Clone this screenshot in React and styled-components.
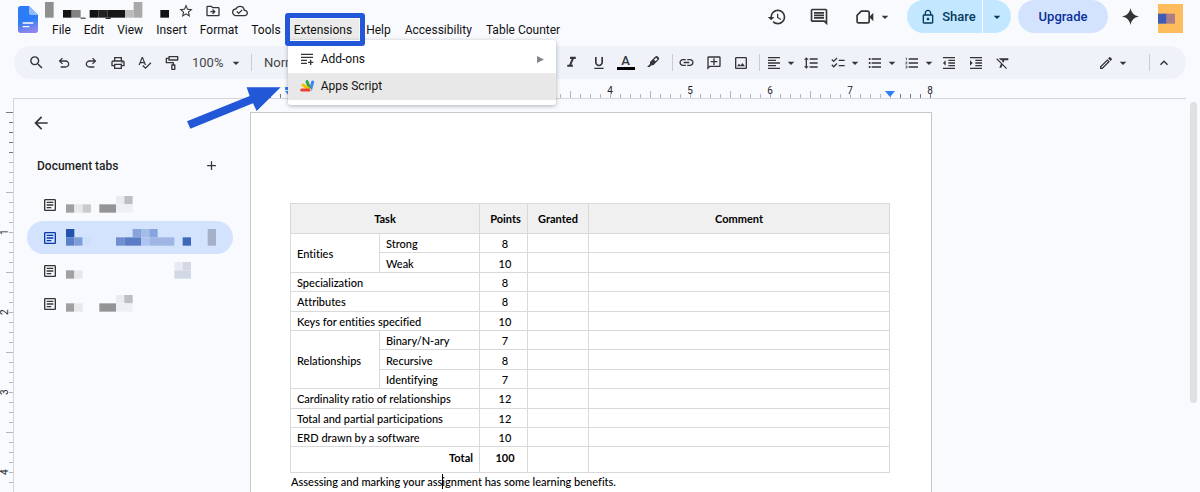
import styled, { createGlobalStyle, css } from 'styled-components'
import {
  MdAdd,
  MdArrowBack,
  MdArrowDropDown,
  MdChecklist,
  MdExpandLess,
  MdFormatAlignLeft,
  MdFormatClear,
  MdFormatIndentDecrease,
  MdFormatIndentIncrease,
  MdFormatItalic,
  MdFormatLineSpacing,
  MdFormatListBulleted,
  MdFormatListNumbered,
  MdFormatUnderlined,
  MdHistory,
  MdLink,
  MdOutlineAddComment,
  MdOutlineArticle,
  MdOutlineCloudDone,
  MdOutlineComment,
  MdOutlineDriveFileMove,
  MdOutlineImage,
  MdOutlineLock,
  MdOutlineModeEdit,
  MdOutlinePrint,
  MdSearch,
  MdSpellcheck,
  MdStarBorder,
} from 'react-icons/md'

const ink = '#1f1f1f'
const iconInk = '#333537'
const canvas = '#f9fafe'
const rule = '#d4d5d8'
const callout = '#2257d8'

const GlobalStyle = createGlobalStyle`
  * {
    box-sizing: border-box;
  }
  body {
    margin: 0;
    background: ${canvas};
    color: ${ink};
    font-family: Roboto, 'Liberation Sans', sans-serif;
    font-size: 12px;
  }
  button, select {
    font: inherit;
    color: inherit;
    border: 0;
    background: none;
    margin: 0;
    padding: 0;
  }
  svg {
    display: block;
    flex: none;
  }
`

const Shell = styled.div`
  display: flex;
  flex-direction: column;
  height: 100vh;
  overflow: hidden;
`

/* ---------- header ---------- */

const Header = styled.header`
  display: flex;
  align-items: flex-start;
  gap: 7px;
  flex: none;
  height: 46px;
  padding: 0 17px 0 18px;
`

const LogoLink = styled.a`
  margin-top: 6px;
`

const TitleRow = styled.div`
  display: flex;
  align-items: center;
  height: 19px;
  padding-top: 3px;
`

const TitleMosaic = styled.svg`
  align-self: flex-end;
  margin-right: 1px;
`

const IconButton = styled.button`
  display: flex;
  align-items: center;
  justify-content: center;
  flex: none;
  width: ${(p) => p.$width || 27}px;
  height: ${(p) => p.$height || 27}px;
  color: ${iconInk};
`

const MenuBar = styled.nav`
  display: flex;
`

const MenuButton = styled.button`
  height: 21px;
  padding: 1px ${(p) => (p.$tight ? 6 : 7)}px 0 7px;
  line-height: 20px;
  white-space: nowrap;
  color: #111;
  ${(p) =>
    p.$open &&
    css`
      background: #ebebeb;
    `}
`

const MenuItem = styled.div`
  position: relative;
`

const Callout = styled.div`
  position: absolute;
  inset: -6px -6px -6px -2px;
  z-index: 3;
  border: 5px solid ${callout};
  border-radius: 3px;
  pointer-events: none;
`

const Pointer = styled.svg`
  position: absolute;
  top: 68px;
  right: 78px;
  z-index: 3;
  pointer-events: none;
`

const Dropdown = styled.div`
  position: absolute;
  top: 100%;
  left: 1px;
  z-index: 2;
  width: 268px;
  padding: 6px 0 5px;
  border-radius: 3px;
  background: #fff;
  box-shadow: 0 1px 4px rgba(60, 64, 67, 0.4);
`

const DropdownItem = styled.button`
  display: flex;
  align-items: center;
  gap: 6px;
  width: 100%;
  height: 27px;
  padding: 0 12px 1px 11px;
  text-align: left;
  color: #111;
  background: ${(p) => (p.$active ? '#e8e8e8' : 'transparent')};
  span {
    flex: 1;
  }
`

const HeaderActions = styled.div`
  display: flex;
  align-items: flex-start;
  margin-left: auto;
  font-size: 13px;
  font-weight: 500;
`

const MeetButton = styled.button`
  display: flex;
  align-items: center;
  gap: 2px;
  height: 33px;
  margin: 0 14px 0 15px;
  color: ${iconInk};
`

const ShareGroup = styled.div`
  display: flex;
  gap: 1px;
  height: 33px;
  margin-right: 7px;
  border-radius: 17px;
  overflow: hidden;
  & > :first-child {
    padding-left: 7px;
  }
`

const ShareButton = styled.button`
  display: flex;
  align-items: center;
  justify-content: center;
  gap: 6px;
  width: ${(p) => p.$width}px;
  background: #c2e7ff;
  color: #063a5c;
`

const UpgradeButton = styled.button`
  width: 90px;
  height: 33px;
  border-radius: 17px;
  background: #d3e3fd;
  color: #0b2f9a;
`

const Avatar = styled.button`
  margin: 4px 0 0 6px;
`

/* ---------- toolbar ---------- */

const Toolbar = styled.div`
  display: flex;
  align-items: center;
  flex: none;
  height: 33px;
  margin: 0 14px;
  padding: 0 9px;
  border-radius: 17px;
  background: #eff2f9;
  font-size: 13px;
`

const Separator = styled.span`
  flex: none;
  width: 1px;
  height: 17px;
  margin-left: 5px;
  background: #c9ccd1;
`

const DropButton = styled.button`
  display: flex;
  align-items: center;
  gap: 1px;
  flex: none;
  width: 34px;
  height: 27px;
  margin-left: 3px;
  padding-left: 3px;
  color: ${iconInk};
`

const SelectBox = styled.label`
  display: flex;
  align-items: center;
  position: relative;
  flex: none;
  width: ${(p) => p.$width}px;
  color: ${iconInk};
  select {
    width: 100%;
    padding: 0 ${(p) => p.$inset}px;
    appearance: none;
    color: #444746;
  }
  svg {
    position: absolute;
    right: 2px;
    pointer-events: none;
  }
`

const TextColor = styled.span`
  width: 18px;
  height: 15px;
  border-bottom: 3px solid #000;
  font-weight: 500;
  line-height: 11px;
  text-align: center;
`

const ModeGroup = styled.div`
  display: flex;
  align-items: center;
  gap: 15px;
  margin-left: auto;
  & > :last-child {
    margin-left: -15px;
  }
`

/* ---------- rulers ---------- */

const Ruler = styled.div`
  display: grid;
  flex: none;
  height: 20px;
  margin: 0 14px 0 13px;
  padding-left: 237px;
  border-bottom: 1px solid ${rule};
  & > * {
    grid-area: 1 / 1;
  }
`

const RulerLabels = styled.div`
  display: flex;
  padding-top: 6px;
  font-size: 10px;
  line-height: 12px;
  color: #222;
  span {
    width: 80px;
    text-align: center;
  }
`

const Ticks = styled.div`
  display: flex;
  align-items: flex-end;
`

const Tick = styled.i`
  flex: none;
  width: 10px;
  height: ${(p) => (p.$half ? 7 : 4)}px;
  border-left: 1px solid ${(p) => (p.$dark ? '#777' : '#b4b6ba')};
`

const Markers = styled.div`
  display: flex;
  justify-content: space-between;
  align-items: flex-end;
  width: 682px;
  padding: 0 37px 1px 35px;
`

const SideRuler = styled.div`
  display: grid;
  grid-template-columns: 14px;
  flex: none;
  width: 14px;
  padding-top: 13px;
  border-right: 1px solid ${rule};
  overflow: hidden;
  & > * {
    grid-area: 1 / 1;
  }
`

const SideLabels = styled.div`
  width: 10px;
  font-size: 10px;
  line-height: 10px;
  color: #222;
  span {
    display: flex;
    align-items: center;
    justify-content: center;
    height: 80px;
    writing-mode: vertical-rl;
    transform: rotate(180deg);
  }
`

const SideTicks = styled.div`
  display: flex;
  flex-direction: column;
  align-items: flex-end;
`

const SideTick = styled.i`
  flex: none;
  width: ${(p) => (p.$half ? 7 : 4)}px;
  height: 10px;
  margin-right: 1px;
  border-top: 1px solid ${(p) => (p.$dark ? '#777' : '#b4b6ba')};
`

/* ---------- body ---------- */

const Workspace = styled.div`
  display: flex;
  flex: 1;
  min-height: 0;
`

const Sidebar = styled.aside`
  flex: none;
  width: 236px;
  padding: 10px 17px 0 13px;
`

const TabsHeader = styled.div`
  display: flex;
  align-items: center;
  justify-content: space-between;
  height: 27px;
  margin: 16px 0 9px;
  padding-left: 10px;
  h2 {
    margin: 0;
    font-size: 12px;
    font-weight: 500;
  }
`

const TabButton = styled.button`
  display: flex;
  align-items: center;
  gap: 8px;
  width: 100%;
  height: 33px;
  padding-left: 15px;
  border-radius: 17px;
  color: ${(p) => (p.$active ? '#0b3ba8' : iconInk)};
  background: ${(p) => (p.$active ? '#d3e3fd' : 'transparent')};
`

const Page = styled.main`
  flex: none;
  width: 682px;
  margin-top: 13px;
  padding: 90px 41px 0 39px;
  border: 1px solid #c7c7c7;
  border-bottom: 0;
  background: #fff;
  color: #000;
  font-family: Lato, 'Liberation Sans', sans-serif;
  font-size: 11px;
  font-weight: 500;
  font-variant-ligatures: none;
`

const Rubric = styled.table`
  width: 100%;
  height: 270px;
  table-layout: fixed;
  border-collapse: collapse;
  th,
  td {
    padding: 2px 6px 0;
    border: 1px solid #d9d9d9;
    line-height: 14px;
    text-align: left;
    font-weight: 500;
  }
`

const HeadRow = styled.tr`
  height: 30px;
  background: #f0f0f0;
  && th {
    padding: 1px 0 0;
    text-align: center;
    font-weight: 700;
  }
  && th:nth-child(2) {
    padding-left: 4px;
  }
`

const Row = styled.tr`
  height: 19px;
`

const TotalRow = styled.tr`
  height: 25px;
  vertical-align: top;
  && th,
  && td {
    padding-top: 4px;
    font-weight: 700;
  }
  && th {
    text-align: right;
  }
`

const PointsCell = styled.td`
  && {
    padding-right: 3px;
    text-align: center;
  }
`

const Paragraph = styled.p`
  margin: 0;
  padding-left: 1px;
  line-height: 17px;
`

const TextCursor = styled.span`
  position: relative;
  &::after {
    content: '';
    position: absolute;
    top: -1px;
    left: 0;
    width: 1px;
    height: 15px;
    background: #000;
  }
`

const ScrollThumb = styled.div`
  flex: none;
  width: 7px;
  height: 301px;
  margin: 3px 3px 0 auto;
  border-radius: 4px;
  background: #dfe0e1;
`

const MirroredIcon = styled(MdOutlineAddComment)`
  transform: scaleX(-1);
`

/* ---------- drawings ---------- */

function DocsLogo() {
  return (
    <svg width="20" height="27" viewBox="0 0 60 81">
      <defs>
        <linearGradient id="sheet" x1="0" y1="0" x2="0.2" y2="1">
          <stop offset="0.6" stopColor="#2b7cf6" />
          <stop offset="1" stopColor="#8a86f0" />
        </linearGradient>
      </defs>
      <path
        d="M8 0H33L60 27V73a8 8 0 0 1-8 8H8a8 8 0 0 1-8-8V8a8 8 0 0 1 8-8Z"
        fill="url(#sheet)"
      />
      <path d="M33 0 60 27H39a6 6 0 0 1-6-6Z" fill="#8fbcff" />
      <path d="M14 51H46M14 62H34" stroke="#fff" strokeWidth="4" />
    </svg>
  )
}

function UndoIcon() {
  return (
    <svg width="16" height="16" viewBox="0 0 24 24" fill="currentColor">
      <path d="M7 19v-2h7.1q1.575 0 2.738-1T18 13.5T16.838 11T14.1 10H7.8l2.6 2.6L9 14L4 9l5-5l1.4 1.4L7.8 8h6.3q2.425 0 4.163 1.575T20 13.5t-1.737 3.925T14.1 19z" />
    </svg>
  )
}

function RedoIcon() {
  return (
    <svg width="16" height="16" viewBox="0 0 24 24" fill="currentColor">
      <path d="M9.9 19q-2.425 0-4.163-1.575T4 13.5t1.738-3.925T9.9 8h6.3l-2.6-2.6L15 4l5 5l-5 5l-1.4-1.4l2.6-2.6H9.9q-1.575 0-2.738 1T6 13.5T7.163 16t2.737 1H17v2z" />
    </svg>
  )
}

function PaintRollerIcon() {
  return (
    <svg
      width="16"
      height="16"
      viewBox="0 0 24 24"
      fill="none"
      stroke="currentColor"
      strokeWidth="2"
      strokeLinejoin="round"
    >
      <path d="M7.5 2.5H20.5V7.5H7.5ZM7.5 5H3.5V11.5H14V15M11.8 15H16.2V21.5H11.8Z" />
    </svg>
  )
}

function HighlighterIcon() {
  return (
    <svg width="16" height="16" viewBox="0 0 24 24" fill="currentColor">
      <path d="M3 18 7.500 13.500 7.500 10.500 15.600 2.400a2.600 2.600 0 0 1 3.700 0l1.200 1.200a2.600 2.600 0 0 1 0 3.700L12.500 15.500 9.500 15.500 7 18Z" />
      <path d="M13.500 7.200 16.700 4 19 6.300 15.800 9.500Z" fill="#eff2f9" />
    </svg>
  )
}

function MeetIcon() {
  return (
    <svg width="20" height="20" viewBox="0 0 24 24">
      <path
        d="M7.5 5H15a2 2 0 0 1 2 2V17a2 2 0 0 1-2 2H4.500a2 2 0 0 1-2-2V10Z"
        fill="none"
        stroke="currentColor"
        strokeWidth="2"
        strokeLinejoin="round"
      />
      <path d="M17 12 22 7V17Z" fill="currentColor" />
    </svg>
  )
}

function SparkIcon() {
  return (
    <svg width="17" height="17" viewBox="0 0 24 24" fill="currentColor">
      <path d="M12 0C13.300 6.800 17.200 10.700 24 12C17.200 13.300 13.300 17.200 12 24C10.700 17.200 6.800 13.300 0 12C6.800 10.700 10.700 6.800 12 0Z" />
    </svg>
  )
}

function AddOnsIcon() {
  return (
    <svg
      width="16"
      height="16"
      viewBox="0 0 24 24"
      fill="none"
      stroke={iconInk}
      strokeWidth="2"
    >
      <path d="M3 5H21M3 9.500H21M3 14H12M3 18.500H12M17.500 13V21M13.500 17H21.500" />
    </svg>
  )
}

function AppsScriptIcon() {
  return (
    <svg
      width="16"
      height="16"
      viewBox="0 0 48 48"
      fill="none"
      strokeWidth="9"
      strokeLinecap="round"
    >
      <path d="M41 12 35 34" stroke="#4285f4" />
      <path d="M24 11 32 31" stroke="#2ea24f" />
      <path d="M12 21 31 34" stroke="#fbbc04" />
      <path d="M8 36H30" stroke="#ea4335" />
      <circle cx="35" cy="35" r="2" fill="#fff" stroke="none" />
    </svg>
  )
}

function Caret() {
  return <MdArrowDropDown size={16} />
}

// blocks: [x, y, width, height, colour] in thirds of a pixel
function Blocks({ blocks }) {
  return blocks.map(([x, y, w, h, fill]) => (
    <rect key={`${x}-${y}`} x={x} y={y} width={w} height={h} fill={fill} />
  ))
}

const titleBlocks = [
  [0, 6, 26, 47, '#8f8f8f'],
  [54, 30, 26, 23, '#141414'],
  [80, 30, 27, 23, '#828282'],
  [107, 53, 15, 3, '#222222'],
  [134, 30, 27, 23, '#141414'],
  [161, 30, 26, 23, '#222222'],
  [187, 30, 53, 23, '#161616'],
  [182, 53, 15, 4, '#222222'],
  [240, 30, 26, 23, '#bcbcbc'],
  [266, 6, 26, 47, '#a9a9a9'],
  [346, 30, 26, 23, '#141414'],
]

const shortName = [
  [0, 25, 25, 25, '#a0a0a2'],
  [25, 25, 25, 25, '#e7e8ec'],
  [100, 25, 50, 25, '#949496'],
  [150, 0, 25, 25, '#eaebef'],
  [175, 0, 25, 25, '#bdbec1'],
  [150, 25, 50, 25, '#eeeff4'],
]

const tabs = [
  { id: 'tab-1', blocks: [...shortName, [50, 25, 25, 25, '#cacbcd']] },
  {
    id: 'tab-2',
    active: true,
    blocks: [
      [0, 0, 25, 25, '#2253ac'],
      [0, 25, 25, 25, '#5b80c9'],
      [25, 25, 25, 25, '#7f9dd9'],
      [50, 25, 25, 25, '#cddffb'],
      [150, 25, 25, 25, '#6f8fcf'],
      [175, 25, 50, 25, '#5a7dc5'],
      [200, 0, 25, 25, '#88a4da'],
      [225, 0, 25, 25, '#a5bbe9'],
      [250, 0, 25, 25, '#88a4dc'],
      [225, 25, 25, 25, '#afc3ef'],
      [250, 25, 75, 25, '#9fb5e4'],
      [350, 25, 25, 25, '#3d69b8'],
      [425, 0, 25, 50, '#a4b0c7'],
    ],
  },
  {
    id: 'tab-3',
    blocks: [
      [0, 25, 25, 25, '#a0a0a2'],
      [25, 25, 25, 25, '#e7e8ec'],
      [325, 0, 25, 25, '#e8ebf2'],
      [350, 0, 25, 25, '#d2d9e5'],
      [325, 25, 50, 25, '#d2d9e5'],
    ],
  },
  { id: 'tab-4', blocks: shortName },
]

/* ---------- data ---------- */

const menusBefore = ['File', 'Edit', 'View', 'Insert', 'Format', 'Tools']
const menusAfter = ['Help', 'Accessibility', 'Table Counter']

const criteria = [
  { group: 'Entities', span: 2, name: 'Strong', points: 8 },
  { name: 'Weak', points: 10, sub: true },
  { name: 'Specialization', points: 8 },
  { name: 'Attributes', points: 8 },
  { name: 'Keys for entities specified', points: 10 },
  { group: 'Relationships', span: 3, name: 'Binary/N-ary', points: 7 },
  { name: 'Recursive', points: 8, sub: true },
  { name: 'Identifying', points: 7, sub: true },
  { name: 'Cardinality ratio of relationships', points: 12 },
  { name: 'Total and partial participations', points: 12 },
  { name: 'ERD drawn by a software', points: 10 },
]

// the open menu covers the first inches of the top ruler
const topInches = ['', '', '', '', 4, 5, 6, 7, 8]
const sideInches = ['', 1, 2, 3, 4]
const horizontalTicks = Array.from({ length: 69 }, (_, i) => i)
const verticalTicks = Array.from({ length: 40 }, (_, i) => i)

function ExtensionsMenu() {
  return (
    <MenuItem>
      <MenuButton $open aria-expanded="true">
        Extensions
      </MenuButton>
      <Dropdown role="menu">
        <DropdownItem role="menuitem">
          <AddOnsIcon />
          <span>Add-ons</span>
          <svg width="7" height="7" viewBox="0 0 7 7" fill="#80868b">
            <path d="M0 0 7 3.500 0 7Z" />
          </svg>
        </DropdownItem>
        <DropdownItem role="menuitem" $active>
          <AppsScriptIcon />
          <span>Apps Script</span>
        </DropdownItem>
      </Dropdown>
      <Callout />
      <Pointer width="94" height="42" viewBox="567 261 282 126">
        <path
          d="M567 364 755 288 746 262H848L776 333 765 310 577 386Z"
          fill={callout}
        />
      </Pointer>
    </MenuItem>
  )
}

function AppHeader() {
  return (
    <Header>
      <LogoLink href="#home" aria-label="Docs home">
        <DocsLogo />
      </LogoLink>
      <div>
        <TitleRow>
          <TitleMosaic width="126" height="19" viewBox="0 0 378 57">
            <Blocks blocks={titleBlocks} />
          </TitleMosaic>
          <IconButton $height={18} aria-label="Star">
            <MdStarBorder size={16} />
          </IconButton>
          <IconButton $height={18} aria-label="Move">
            <MdOutlineDriveFileMove size={16} />
          </IconButton>
          <IconButton $height={18} aria-label="Saved to Drive">
            <MdOutlineCloudDone size={16} />
          </IconButton>
        </TitleRow>
        <MenuBar>
          {menusBefore.map((name) => (
            <MenuButton
              key={name}
              $tight
            >
              {name}
            </MenuButton>
          ))}
          <ExtensionsMenu />
          {menusAfter.map((name) => (
            <MenuButton key={name}>{name}</MenuButton>
          ))}
        </MenuBar>
      </div>
      <HeaderActions>
        <IconButton $width={42} $height={33} aria-label="Version history">
          <MdHistory size={20} />
        </IconButton>
        <IconButton $width={42} $height={33} aria-label="Comments">
          <MdOutlineComment size={20} />
        </IconButton>
        <MeetButton aria-label="Meet">
          <MeetIcon />
          <Caret />
        </MeetButton>
        <ShareGroup>
          <ShareButton $width={75}>
            <MdOutlineLock size={16} />
            Share
          </ShareButton>
          <ShareButton $width={28} aria-label="Share options">
            <Caret />
          </ShareButton>
        </ShareGroup>
        <UpgradeButton>Upgrade</UpgradeButton>
        <IconButton $width={44} $height={33} aria-label="Ask Gemini">
          <SparkIcon />
        </IconButton>
        <Avatar aria-label="Account">
          <svg width="25" height="29" viewBox="0 0 75 87">
            <rect width="75" height="87" fill="#ffbc5c" />
            <rect y="29" width="26" height="30" fill="#405ab6" />
            <rect x="26" y="29" width="25" height="30" fill="#a97e88" />
          </svg>
        </Avatar>
      </HeaderActions>
    </Header>
  )
}

function AppToolbar() {
  return (
    <Toolbar role="toolbar">
      <IconButton aria-label="Search the menus">
        <MdSearch size={17} />
      </IconButton>
      <IconButton aria-label="Undo">
        <UndoIcon />
      </IconButton>
      <IconButton aria-label="Redo">
        <RedoIcon />
      </IconButton>
      <IconButton aria-label="Print">
        <MdOutlinePrint size={16} />
      </IconButton>
      <IconButton aria-label="Spelling">
        <MdSpellcheck size={15} />
      </IconButton>
      <IconButton aria-label="Paint format">
        <PaintRollerIcon />
      </IconButton>
      <SelectBox $width={61} $inset={7}>
        <select aria-label="Zoom" defaultValue="100%">
          <option>100%</option>
        </select>
        <Caret />
      </SelectBox>
      <Separator />
      <SelectBox $width={306} $inset={12}>
        <select aria-label="Styles" defaultValue="Normal text">
          <option>Normal text</option>
        </select>
      </SelectBox>
      <IconButton aria-label="Italic">
        <MdFormatItalic size={17} />
      </IconButton>
      <IconButton aria-label="Underline">
        <MdFormatUnderlined size={16} />
      </IconButton>
      <IconButton aria-label="Text color">
        <TextColor>A</TextColor>
      </IconButton>
      <IconButton $width={28} aria-label="Highlight color">
        <HighlighterIcon />
      </IconButton>
      <Separator />
      <IconButton aria-label="Insert link">
        <MdLink size={17} />
      </IconButton>
      <IconButton aria-label="Add comment">
        <MirroredIcon size={16} />
      </IconButton>
      <IconButton aria-label="Insert image">
        <MdOutlineImage size={16} />
      </IconButton>
      <Separator />
      <DropButton aria-label="Align">
        <MdFormatAlignLeft size={16} />
        <Caret />
      </DropButton>
      <IconButton aria-label="Line spacing">
        <MdFormatLineSpacing size={16} />
      </IconButton>
      <DropButton aria-label="Checklist">
        <MdChecklist size={16} />
        <Caret />
      </DropButton>
      <DropButton aria-label="Bulleted list">
        <MdFormatListBulleted size={16} />
        <Caret />
      </DropButton>
      <DropButton aria-label="Numbered list">
        <MdFormatListNumbered size={16} />
        <Caret />
      </DropButton>
      <IconButton aria-label="Decrease indent">
        <MdFormatIndentDecrease size={16} />
      </IconButton>
      <IconButton aria-label="Increase indent">
        <MdFormatIndentIncrease size={16} />
      </IconButton>
      <IconButton aria-label="Clear formatting">
        <MdFormatClear size={16} />
      </IconButton>
      <ModeGroup>
        <DropButton aria-label="Editing mode">
          <MdOutlineModeEdit size={16} />
          <Caret />
        </DropButton>
        <Separator />
        <IconButton aria-label="Hide the menus">
          <MdExpandLess size={16} />
        </IconButton>
      </ModeGroup>
    </Toolbar>
  )
}

function TopRuler() {
  return (
    <Ruler>
      <RulerLabels>
        {topInches.map((n, i) => (
          <span key={i}>{n}</span>
        ))}
      </RulerLabels>
      <Ticks>
        {horizontalTicks.map((i) => (
          <Tick key={i} $half={i > 0 && i % 8 === 0} $dark={i < 4 || i > 64} />
        ))}
      </Ticks>
      <Markers>
        <svg width="10" height="10" viewBox="0 0 10 10" fill="#2f7df6">
          <path d="M0 0H10V3H0ZM0 4H10L5 10Z" />
        </svg>
        <svg width="10" height="6" viewBox="0 0 10 6" fill="#2f7df6">
          <path d="M0 0H10L5 6Z" />
        </svg>
      </Markers>
    </Ruler>
  )
}

function DocumentTabs() {
  return (
    <Sidebar>
      <IconButton aria-label="Close tabs">
        <MdArrowBack size={20} />
      </IconButton>
      <TabsHeader>
        <h2>Document tabs</h2>
        <IconButton $width={44} aria-label="Add tab">
          <MdAdd size={15} />
        </IconButton>
      </TabsHeader>
      {tabs.map((tab) => (
        <TabButton key={tab.id} $active={tab.active} aria-label={tab.id}>
          <MdOutlineArticle size={16} />
          <svg width="150" height="17" viewBox="0 0 450 51">
            <Blocks blocks={tab.blocks} />
          </svg>
        </TabButton>
      ))}
    </Sidebar>
  )
}

function RubricTable() {
  return (
    <Rubric>
      <colgroup>
        <col width="89" />
        <col width="100" />
        <col width="48" />
        <col width="61" />
        <col />
      </colgroup>
      <thead>
        <HeadRow>
          <th colSpan={2}>Task</th>
          <th>Points</th>
          <th>Granted</th>
          <th>Comment</th>
        </HeadRow>
      </thead>
      <tbody>
        {criteria.map(({ group, span, name, points, sub }) => (
          <Row key={name}>
            {group && <th rowSpan={span}>{group}</th>}
            <td colSpan={group || sub ? 1 : 2}>{name}</td>
            <PointsCell>{points}</PointsCell>
            <td />
            <td />
          </Row>
        ))}
        <TotalRow>
          <th colSpan={2}>Total</th>
          <PointsCell>100</PointsCell>
          <td />
          <td />
        </TotalRow>
      </tbody>
    </Rubric>
  )
}

export default function App() {
  return (
    <Shell>
      <GlobalStyle />
      <AppHeader />
      <AppToolbar />
      <TopRuler />
      <Workspace>
        <SideRuler>
          <SideLabels>
            {sideInches.map((n) => (
              <span key={n}>{n}</span>
            ))}
          </SideLabels>
          <SideTicks>
            {verticalTicks.map((i) => (
              <SideTick key={i} $half={i % 8 === 0} $dark={i < 5} />
            ))}
          </SideTicks>
        </SideRuler>
        <DocumentTabs />
        <Page>
          <RubricTable />
          <Paragraph>
            Assessing and marking your ass
            <TextCursor />
            ignment has some learning benefits.
          </Paragraph>
        </Page>
        <ScrollThumb />
      </Workspace>
    </Shell>
  )
}
